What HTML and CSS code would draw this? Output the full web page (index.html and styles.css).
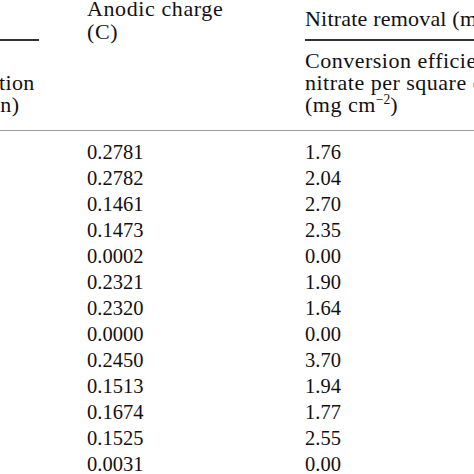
FILE: index.html
```html
<!DOCTYPE html>
<html>
<head>
<meta charset="utf-8">
<link rel="stylesheet" href="styles.css">
</head>
<body>
<div class="table">
  <div class="grp-left"></div>
  <div class="anodic">Anodic charge<br>(C)</div>
  <div class="grp-right">Nitrate removal (mg)</div>

  <div class="sub-left"><div class="sub-left-text">Duration<br>(min)</div></div>
  <div class="sub-right">Conversion efficiency of<br>nitrate per square centimetre<br>(mg cm<sup>−2</sup>)</div>

  <div class="rule"></div>

  <div class="body">
    <div class="row"><span class="c1"></span><span class="c2">0.2781</span><span class="c3">1.76</span></div>
    <div class="row"><span class="c1"></span><span class="c2">0.2782</span><span class="c3">2.04</span></div>
    <div class="row"><span class="c1"></span><span class="c2">0.1461</span><span class="c3">2.70</span></div>
    <div class="row"><span class="c1"></span><span class="c2">0.1473</span><span class="c3">2.35</span></div>
    <div class="row"><span class="c1"></span><span class="c2">0.0002</span><span class="c3">0.00</span></div>
    <div class="row"><span class="c1"></span><span class="c2">0.2321</span><span class="c3">1.90</span></div>
    <div class="row"><span class="c1"></span><span class="c2">0.2320</span><span class="c3">1.64</span></div>
    <div class="row"><span class="c1"></span><span class="c2">0.0000</span><span class="c3">0.00</span></div>
    <div class="row"><span class="c1"></span><span class="c2">0.2450</span><span class="c3">3.70</span></div>
    <div class="row"><span class="c1"></span><span class="c2">0.1513</span><span class="c3">1.94</span></div>
    <div class="row"><span class="c1"></span><span class="c2">0.1674</span><span class="c3">1.77</span></div>
    <div class="row"><span class="c1"></span><span class="c2">0.1525</span><span class="c3">2.55</span></div>
    <div class="row"><span class="c1"></span><span class="c2">0.0031</span><span class="c3">0.00</span></div>
  </div>
</div>
</body>
</html>
```
FILE: styles.css
```css
html, body {
  margin: 0;
  padding: 0;
  background: #fff;
  overflow: hidden;
  width: 474px;
  height: 474px;
}
body {
  font-family: "Liberation Serif", "Times New Roman", serif;
  color: #111;
}
.table {
  display: grid;
  grid-template-columns: 87px 218px 400px;
  margin-top: -3px;
  white-space: nowrap;
  font-size: 22px;
  letter-spacing: 0.4px;
}
.grp-left {
  grid-column: 1;
  grid-row: 1;
  width: 39px;
  height: 42px;
  border-bottom: 2px solid #333;
}
.anodic {
  grid-column: 2;
  grid-row: 1 / span 2;
  line-height: 23px;
  letter-spacing: 0.6px;
}
.grp-right {
  grid-column: 3;
  grid-row: 1;
  padding: 11px 0 9px;
  line-height: 22px;
  border-bottom: 2px solid #333;
  letter-spacing: 0.2px;
}
.sub-left {
  grid-column: 1;
  grid-row: 2;
  align-self: end;
  padding-bottom: 14px;
  line-height: 22px;
}
.sub-left-text {
  width: 100px;
  margin-left: -56px;
  text-align: center;
}
.sub-right {
  grid-column: 3;
  grid-row: 2;
  padding: 9px 0 14px;
  line-height: 22px;
  letter-spacing: 0.5px;
}
.sub-right sup {
  font-size: 0.62em;
  line-height: 0;
  vertical-align: 0.62em;
  letter-spacing: 0;
}
.rule {
  grid-column: 1 / -1;
  border-top: 1.5px solid #9a9a9a;
}
.body {
  grid-column: 1 / -1;
  padding-top: 8px;
  font-size: 20.5px;
  letter-spacing: 0;
}
.row {
  display: grid;
  grid-template-columns: 87px 218px 1fr;
  height: 26px;
  line-height: 26px;
}
```
